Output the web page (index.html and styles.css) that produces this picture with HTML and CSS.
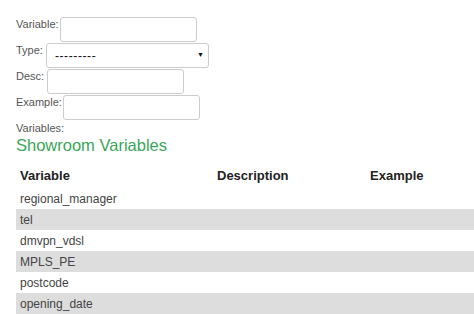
FILE: index.html
```html
<!DOCTYPE html>
<html lang="en">
<head>
  <meta charset="UTF-8">
  <title>Showroom Variables</title>
  <link rel="stylesheet" href="styles.css">
</head>
<body>
  <div class="container">
    <form class="var-form">
      <div class="field">
        <label for="variable">Variable:</label>
        <input type="text" id="variable" class="w137">
      </div>
      <div class="field">
        <label for="type">Type:</label>
        <span class="select-wrap">
          <select id="type">
            <option>---------</option>
          </select>
        </span>
      </div>
      <div class="field">
        <label for="desc" class="desc">Desc:</label>
        <input type="text" id="desc" class="w137">
      </div>
      <div class="field">
        <label for="example">Example:</label>
        <input type="text" id="example" class="w137">
      </div>
      <div class="field">
        <label>Variables:</label>
      </div>
    </form>
    <h2>Showroom Variables</h2>
    <table>
      <thead>
        <tr>
          <th class="col1">Variable</th>
          <th class="col2">Description</th>
          <th>Example</th>
        </tr>
      </thead>
      <tbody>
        <tr><td>regional_manager</td><td></td><td></td></tr>
        <tr><td>tel</td><td></td><td></td></tr>
        <tr><td>dmvpn_vdsl</td><td></td><td></td></tr>
        <tr><td>MPLS_PE</td><td></td><td></td></tr>
        <tr><td>postcode</td><td></td><td></td></tr>
        <tr><td>opening_date</td><td></td><td></td></tr>
      </tbody>
    </table>
  </div>
</body>
</html>
```
FILE: styles.css
```css
body {
  font-family: "Liberation Sans", Arial, sans-serif;
  margin: 0;
  color: #333;
}
.container {
  padding: 16px 0 0 16px;
}
.field {
  display: flex;
  align-items: flex-start;
  height: 26px;
}
.field label {
  font-size: 11px;
  color: #555;
  line-height: 14px;
  margin-top: 1px;
  margin-right: 1px;
}
.field label.desc {
  margin-right: 3px;
}
.field input {
  box-sizing: border-box;
  height: 25px;
  margin: 1px 0 0;
  border: 1px solid #ccc;
  border-radius: 3px;
}
.w137 {
  width: 137px;
}
.select-wrap {
  position: relative;
  margin: 1px 0 0 2px;
}
.select-wrap::after {
  content: "\25BC";
  position: absolute;
  right: 5px;
  top: 8px;
  font-size: 7px;
  color: #111;
  pointer-events: none;
}
.field select {
  display: block;
  box-sizing: border-box;
  width: 163px;
  height: 25px;
  border: 1px solid #ccc;
  border-radius: 3px;
  background: #fff;
  font-family: "Liberation Sans", Arial, sans-serif;
  font-size: 12px;
  letter-spacing: 0.6px;
  color: #111;
  padding-left: 8px;
  appearance: none;
  -webkit-appearance: none;
}
.field:last-child {
  height: 14px;
}
h2 {
  font-size: 16.5px;
  font-weight: normal;
  color: #3aa65a;
  margin: 2px 0 7px;
}
table {
  width: 458px;
  border-collapse: collapse;
  font-size: 12px;
}
th {
  text-align: left;
  font-size: 13px;
  color: #222;
  padding: 6px 4px 5px;
}
.col1 {
  width: 189px;
}
.col2 {
  width: 145px;
}
td {
  height: 21px;
  padding: 0 4px;
  color: #444;
}
tbody tr:nth-child(even) {
  background: #dddddd;
}
```
